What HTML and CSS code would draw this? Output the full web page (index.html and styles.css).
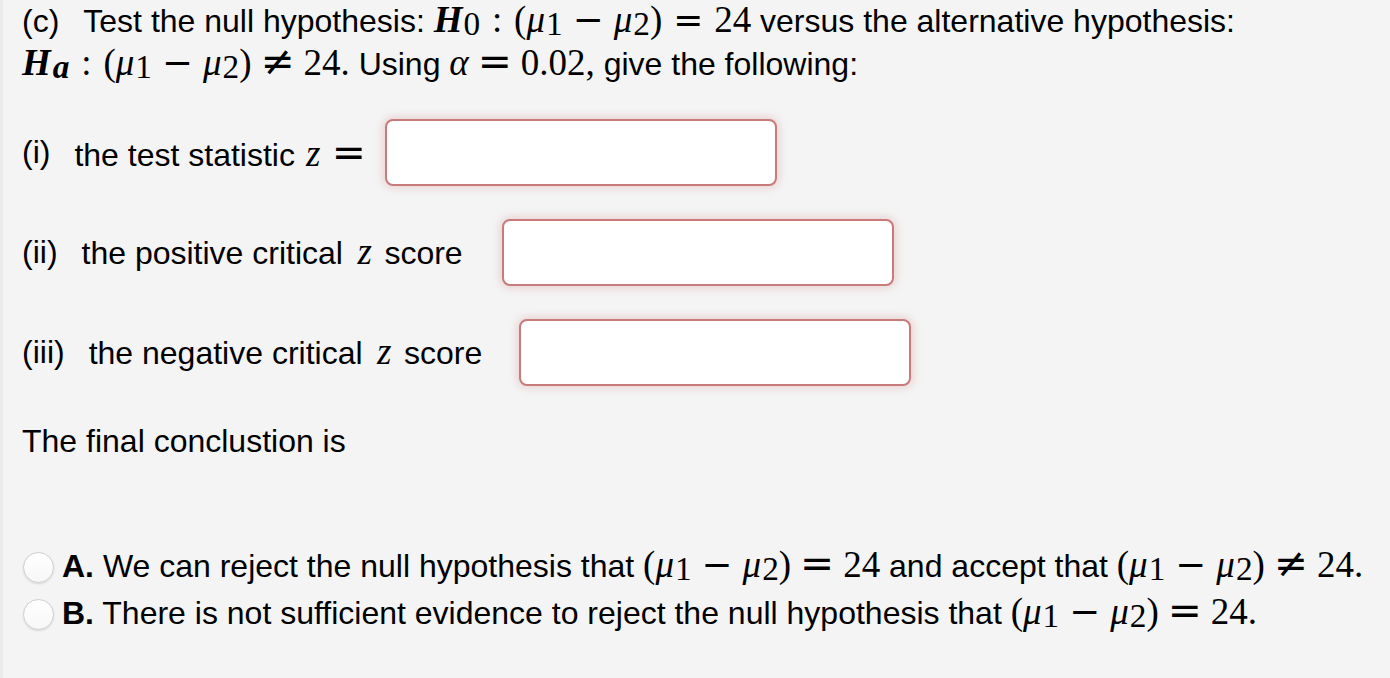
FILE: index.html
```html
<!DOCTYPE html>
<html>
<head>
<meta charset="utf-8">
<link rel="stylesheet" href="styles.css">
</head>
<body>
<div class="page">
  <div class="intro">
    <div class="line first"><span class="num">(c)</span>Test the null hypothesis: <span class="math"><span class="H">H</span><span class="sub">0</span><span class="col">:</span>(<span class="mi">μ</span><span class="sub">1</span><span class="bin">−</span><span class="mi">μ</span><span class="sub">2</span>)<span class="rel">=</span>24</span> versus the alternative hypothesis:</div>
    <div class="line"><span class="math"><span class="H">H</span><span class="sub subb">a</span><span class="col">:</span>(<span class="mi">μ</span><span class="sub">1</span><span class="bin">−</span><span class="mi">μ</span><span class="sub">2</span>)<span class="rel">≠</span>24.</span> Using <span class="math"><span class="mi">α</span><span class="rel">=</span>0.02,</span> give the following:</div>
  </div>

  <div class="row">
    <span class="num">(i)</span><span class="lbl">the test statistic <span class="math"><span class="mi zz">z</span><span class="rel">=</span></span></span><span class="box b1"></span>
  </div>
  <div class="row">
    <span class="num">(ii)</span><span class="lbl">the positive critical <span class="math"><span class="mi zs">z</span></span> score</span><span class="box b2"></span>
  </div>
  <div class="row">
    <span class="num">(iii)</span><span class="lbl">the negative critical <span class="math"><span class="mi zs">z</span></span> score</span><span class="box b3"></span>
  </div>

  <div class="concl">The final conclustion is</div>

  <div class="choices">
    <div class="choice"><span class="radio"></span><span class="ctext"><b>A.</b> We can reject the null hypothesis that <span class="math">(<span class="mi">μ</span><span class="sub">1</span><span class="bin">−</span><span class="mi">μ</span><span class="sub">2</span>)<span class="rel">=</span>24</span> and accept that <span class="math">(<span class="mi">μ</span><span class="sub">1</span><span class="bin">−</span><span class="mi">μ</span><span class="sub">2</span>)<span class="rel">≠</span>24.</span></span></div>
    <div class="choice"><span class="radio"></span><span class="ctext"><b>B.</b> There is not sufficient evidence to reject the null hypothesis that <span class="math">(<span class="mi">μ</span><span class="sub">1</span><span class="bin">−</span><span class="mi">μ</span><span class="sub">2</span>)<span class="rel">=</span>24.</span></span></div>
  </div>
</div>
</body>
</html>
```
FILE: styles.css
```css
html, body {
  margin: 0;
  padding: 0;
  background: #f4f4f4;
}
body {
  height: 678px;
  overflow: hidden;
  border-left: 3px solid #ebebeb;
  box-sizing: border-box;
}
.page {
  padding-left: 19px;
  font-family: "Liberation Sans", Arial, Helvetica, sans-serif;
  font-size: 32px;
  color: #000;
}
.intro {
  line-height: 45px;
}
.line {
  white-space: nowrap;
  height: 45px;
}
.line.first {
  height: 41px;
  line-height: 42px;
}
.num {
  margin-right: 24px;
}
.math {
  font-family: "Liberation Serif", "Times New Roman", serif;
  font-size: 37px;
  line-height: 1;
}
.mi {
  font-style: italic;
}
.zz {
  margin: 0 0.06em;
}
.zs {
  margin: 0 0.1em 0 0.15em;
}
.H {
  font-style: italic;
  font-weight: bold;
}
.sub {
  font-size: 0.9em;
  position: relative;
  top: 0.1em;
  margin-left: 1px;
}
.subb {
  font-style: italic;
  font-weight: bold;
  margin-left: 2px;
}
.col {
  padding: 0 0.32em;
}
.bin {
  font-family: "DejaVu Sans", sans-serif;
  font-size: 1em;
  padding: 0 0.27em;
}
.rel {
  font-family: "DejaVu Sans", sans-serif;
  font-size: 1.1em;
  padding: 0 0.22em;
}
.first .rel {
  font-size: 0.97em;
  padding: 0 0.305em;
}
.row {
  display: flex;
  align-items: center;
  height: 67px;
  margin-top: 33px;
  white-space: nowrap;
}
.row + .row {
  margin-top: 33px;
}
.lbl {
  display: inline-block;
}
.box {
  display: block;
  width: 392px;
  height: 67px;
  box-sizing: border-box;
  background: #fff;
  border: 2px solid #c97a7a;
  border-radius: 8px;
  box-shadow: 0 0 9px 2px rgba(205, 120, 120, 0.28);
}
.b1 {
  margin-left: 10px;
}
.b2 {
  margin-left: 39px;
}
.b3 {
  margin-left: 37px;
}
.concl {
  margin-top: 33px;
  line-height: 45px;
}
.choices {
  margin-top: 76px;
}
.choice {
  display: flex;
  align-items: center;
  height: 47px;
  white-space: nowrap;
}
.radio {
  display: block;
  width: 31px;
  height: 31px;
  box-sizing: border-box;
  margin-left: 1px;
  margin-right: 8px;
  margin-top: 8px;
  border-radius: 50%;
  border: 1px solid #cfcfcf;
  background: linear-gradient(#ffffff, #f7f7f7);
  box-shadow: 0 1px 2px rgba(0, 0, 0, 0.12);
}
.ctext b {
  font-weight: bold;
}
```
